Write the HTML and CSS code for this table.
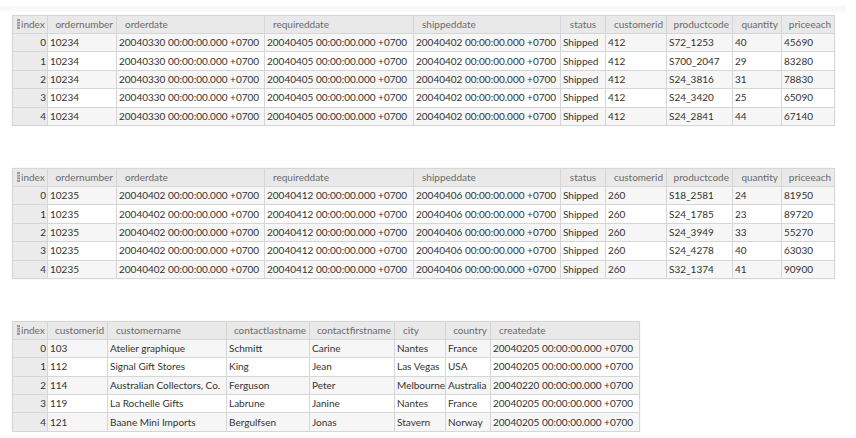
FILE: index.html
```html
<!DOCTYPE html>
<html>
<head>
<meta charset="utf-8">
<link rel="stylesheet" href="styles.css">
</head>
<body>
<div class="topshade"></div>
<main class="page">
  <table class="grid orders">
    <colgroup>
      <col class="w-index"><col style="width:69px"><col style="width:148px"><col style="width:149px"><col style="width:147px"><col style="width:45px"><col style="width:61px"><col style="width:66px"><col style="width:49px"><col style="width:53px">
    </colgroup>
    <thead>
      <tr>
        <th class="idx"><span class="handle"><svg width="3" height="10" viewBox="0 0 3 10"><rect x="0" y="0" width="3" height="2"/><rect x="0" y="2.7" width="3" height="2"/><rect x="0" y="5.4" width="3" height="2"/><rect x="0" y="8" width="3" height="2"/></svg></span>index</th>
        <th class="r">ordernumber</th><th class="l">orderdate</th><th class="l">requireddate</th><th class="l">shippeddate</th><th class="c">status</th><th class="r">customerid</th><th class="r">productcode</th><th class="r">quantity</th><th class="r">priceeach</th>
      </tr>
    </thead>
    <tbody>
      <tr><td class="idx">0</td><td>10234</td><td>20040330 00:00:00.000 +0700</td><td>20040405 00:00:00.000 +0700</td><td>20040402 00:00:00.000 +0700</td><td>Shipped</td><td>412</td><td>S72_1253</td><td>40</td><td>45690</td></tr>
      <tr><td class="idx">1</td><td>10234</td><td>20040330 00:00:00.000 +0700</td><td>20040405 00:00:00.000 +0700</td><td>20040402 00:00:00.000 +0700</td><td>Shipped</td><td>412</td><td>S700_2047</td><td>29</td><td>83280</td></tr>
      <tr><td class="idx">2</td><td>10234</td><td>20040330 00:00:00.000 +0700</td><td>20040405 00:00:00.000 +0700</td><td>20040402 00:00:00.000 +0700</td><td>Shipped</td><td>412</td><td>S24_3816</td><td>31</td><td>78830</td></tr>
      <tr><td class="idx">3</td><td>10234</td><td>20040330 00:00:00.000 +0700</td><td>20040405 00:00:00.000 +0700</td><td>20040402 00:00:00.000 +0700</td><td>Shipped</td><td>412</td><td>S24_3420</td><td>25</td><td>65090</td></tr>
      <tr><td class="idx">4</td><td>10234</td><td>20040330 00:00:00.000 +0700</td><td>20040405 00:00:00.000 +0700</td><td>20040402 00:00:00.000 +0700</td><td>Shipped</td><td>412</td><td>S24_2841</td><td>44</td><td>67140</td></tr>
    </tbody>
  </table>

  <table class="grid orders">
    <colgroup>
      <col class="w-index"><col style="width:69px"><col style="width:148px"><col style="width:149px"><col style="width:147px"><col style="width:45px"><col style="width:61px"><col style="width:66px"><col style="width:49px"><col style="width:53px">
    </colgroup>
    <thead>
      <tr>
        <th class="idx"><span class="handle"><svg width="3" height="10" viewBox="0 0 3 10"><rect x="0" y="0" width="3" height="2"/><rect x="0" y="2.7" width="3" height="2"/><rect x="0" y="5.4" width="3" height="2"/><rect x="0" y="8" width="3" height="2"/></svg></span>index</th>
        <th class="r">ordernumber</th><th class="l">orderdate</th><th class="l">requireddate</th><th class="l">shippeddate</th><th class="c">status</th><th class="r">customerid</th><th class="r">productcode</th><th class="r">quantity</th><th class="r">priceeach</th>
      </tr>
    </thead>
    <tbody>
      <tr><td class="idx">0</td><td>10235</td><td>20040402 00:00:00.000 +0700</td><td>20040412 00:00:00.000 +0700</td><td>20040406 00:00:00.000 +0700</td><td>Shipped</td><td>260</td><td>S18_2581</td><td>24</td><td>81950</td></tr>
      <tr><td class="idx">1</td><td>10235</td><td>20040402 00:00:00.000 +0700</td><td>20040412 00:00:00.000 +0700</td><td>20040406 00:00:00.000 +0700</td><td>Shipped</td><td>260</td><td>S24_1785</td><td>23</td><td>89720</td></tr>
      <tr><td class="idx">2</td><td>10235</td><td>20040402 00:00:00.000 +0700</td><td>20040412 00:00:00.000 +0700</td><td>20040406 00:00:00.000 +0700</td><td>Shipped</td><td>260</td><td>S24_3949</td><td>33</td><td>55270</td></tr>
      <tr><td class="idx">3</td><td>10235</td><td>20040402 00:00:00.000 +0700</td><td>20040412 00:00:00.000 +0700</td><td>20040406 00:00:00.000 +0700</td><td>Shipped</td><td>260</td><td>S24_4278</td><td>40</td><td>63030</td></tr>
      <tr><td class="idx">4</td><td>10235</td><td>20040402 00:00:00.000 +0700</td><td>20040412 00:00:00.000 +0700</td><td>20040406 00:00:00.000 +0700</td><td>Shipped</td><td>260</td><td>S32_1374</td><td>41</td><td>90900</td></tr>
    </tbody>
  </table>

  <table class="grid customers">
    <colgroup>
      <col class="w-index"><col style="width:60px"><col style="width:119px"><col style="width:83px"><col style="width:85px"><col style="width:51px"><col style="width:45px"><col style="width:149px">
    </colgroup>
    <thead>
      <tr>
        <th class="idx"><span class="handle"><svg width="3" height="10" viewBox="0 0 3 10"><rect x="0" y="0" width="3" height="2"/><rect x="0" y="2.7" width="3" height="2"/><rect x="0" y="5.4" width="3" height="2"/><rect x="0" y="8" width="3" height="2"/></svg></span>index</th>
        <th class="r">customerid</th><th class="l">customername</th><th class="r">contactlastname</th><th class="r">contactfirstname</th><th class="l">city</th><th class="r">country</th><th class="l">createdate</th>
      </tr>
    </thead>
    <tbody>
      <tr><td class="idx">0</td><td>103</td><td>Atelier graphique</td><td>Schmitt</td><td>Carine</td><td>Nantes</td><td>France</td><td>20040205 00:00:00.000 +0700</td></tr>
      <tr><td class="idx">1</td><td>112</td><td>Signal Gift Stores</td><td>King</td><td>Jean</td><td>Las Vegas</td><td>USA</td><td>20040205 00:00:00.000 +0700</td></tr>
      <tr><td class="idx">2</td><td>114</td><td>Australian Collectors, Co.</td><td>Ferguson</td><td>Peter</td><td>Melbourne</td><td>Australia</td><td>20040220 00:00:00.000 +0700</td></tr>
      <tr><td class="idx">3</td><td>119</td><td>La Rochelle Gifts</td><td>Labrune</td><td>Janine</td><td>Nantes</td><td>France</td><td>20040205 00:00:00.000 +0700</td></tr>
      <tr><td class="idx">4</td><td>121</td><td>Baane Mini Imports</td><td>Bergulfsen</td><td>Jonas</td><td>Stavern</td><td>Norway</td><td>20040205 00:00:00.000 +0700</td></tr>
    </tbody>
  </table>
</main>
</body>
</html>
```

FILE: styles.css
```css
html, body {
  margin: 0;
  padding: 0;
  background: #ffffff;
}

body {
  font-family: Lato, "Open Sans", sans-serif;
  font-size: 10px;
  color: #333333;
  position: relative;
}

.topshade {
  position: absolute;
  left: 0;
  top: 4px;
  width: 846px;
  height: 10px;
  background: linear-gradient(to bottom, rgba(0,0,0,0.0), rgba(0,0,0,0.035) 40%, rgba(0,0,0,0));
  pointer-events: none;
}

.page {
  display: flex;
  flex-direction: column;
  align-items: flex-start;
  gap: 42px;
  padding: 15px 0 0 12px;
}

.grid {
  border-collapse: collapse;
  table-layout: fixed;
  border: 1px solid #c4c4c4;
  box-shadow: 0 0 1px rgba(0,0,0,0.12);
}

.orders { width: 822px; }
.customers { width: 627px; }

.w-index { width: 35px; }

.grid th,
.grid td {
  border: 1px solid #d6d6d6;
  padding: 0 2px;
  height: 17.4px;
  line-height: 17px;
  white-space: nowrap;
  overflow: hidden;
  text-align: left;
  font-weight: 400;
}

.grid th {
  background: #e9e9e9;
  color: #6a6a6a;
  height: 17px;
  padding: 0 3px;
}

.grid th.l { text-align: left; padding-left: 8px; }
.grid th.r { text-align: right; }
.grid th.c { text-align: center; }

.grid th.idx {
  text-align: left;
  padding-left: 4px;
}

.handle {
  display: inline-block;
  vertical-align: -1px;
  margin-right: 1px;
}

.handle svg {
  display: block;
  fill: #9a9a9a;
}

.grid td.idx {
  background: #ebebeb;
  text-align: right;
  padding-right: 1px;
}

.grid tbody tr:nth-child(odd) td {
  background: #f6f6f6;
}

.grid tbody tr:nth-child(odd) td.idx {
  background: #ebebeb;
}
```
